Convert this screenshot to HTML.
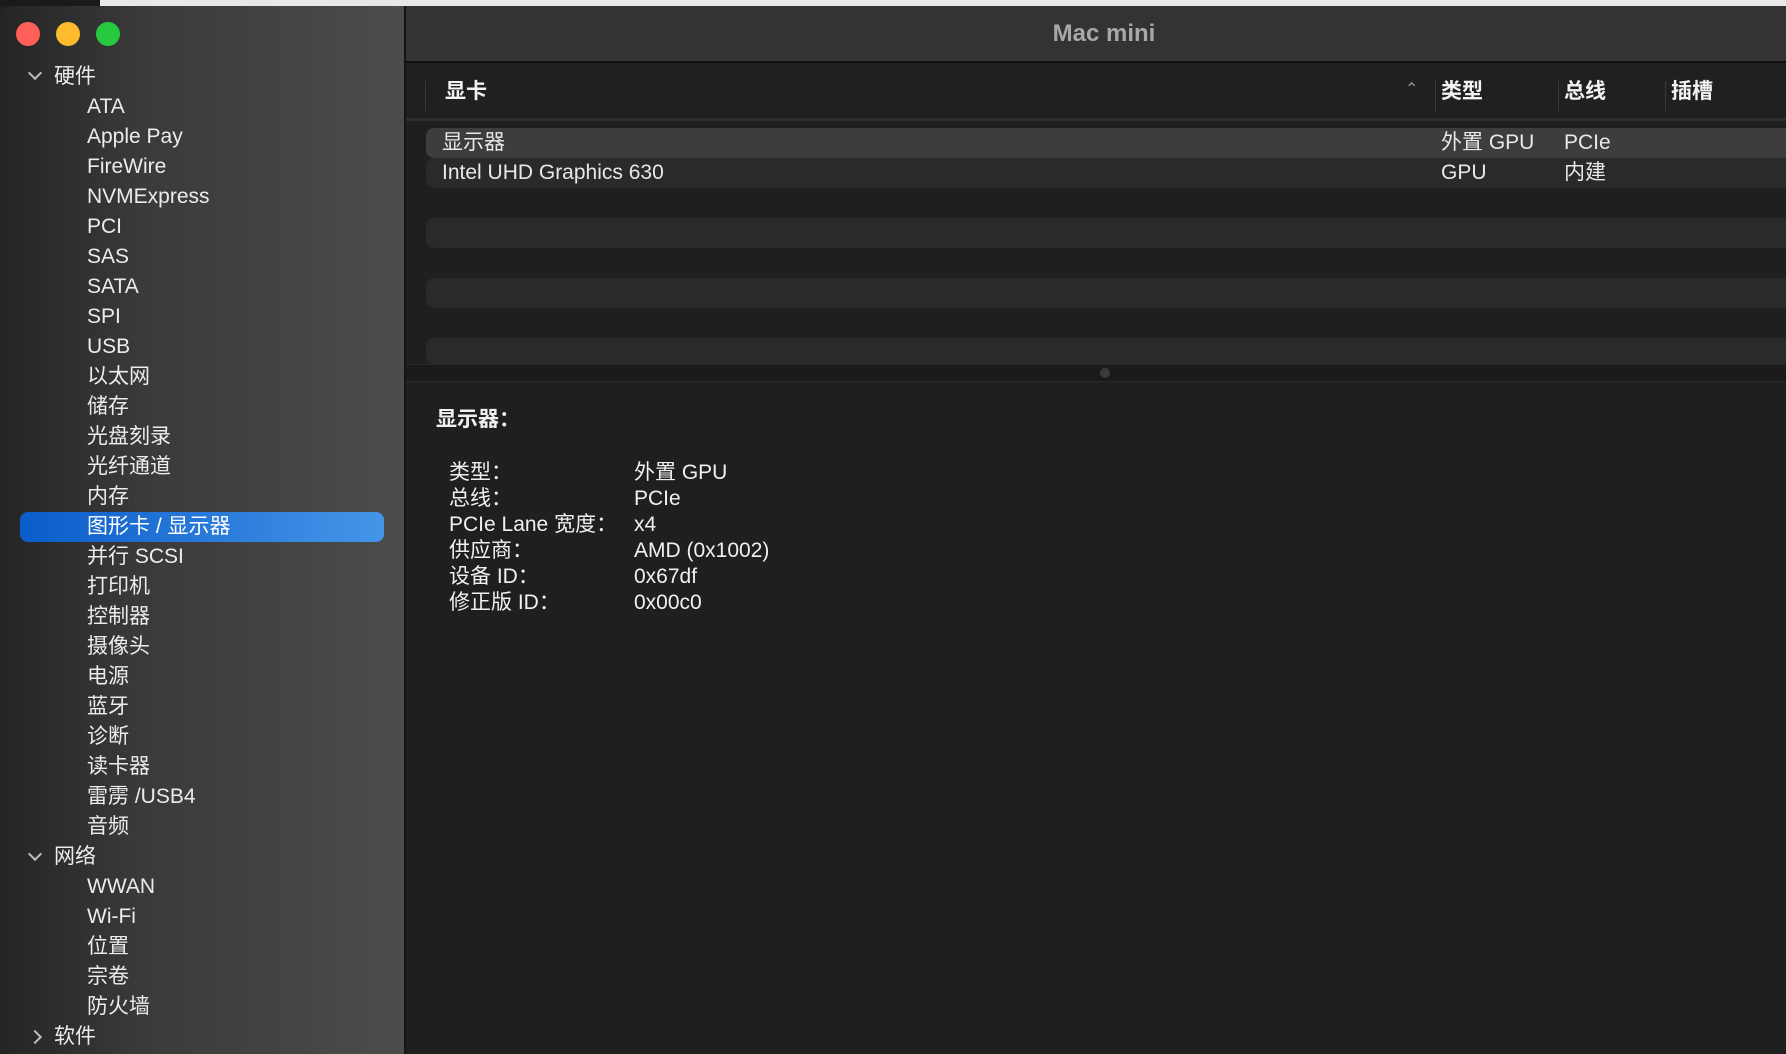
<!DOCTYPE html>
<html><head><meta charset="utf-8"><style>
*{margin:0;padding:0;box-sizing:border-box}
body{width:1786px;height:1054px;background:#1e1f1f;overflow:hidden;position:relative;font-family:"Liberation Sans","Noto Sans CJK SC",sans-serif;color:#e6e6e6}
.top{position:absolute;left:0;top:0;width:1786px;height:6px;background:#e8e8e8}
.top2{position:absolute;left:0;top:0;width:100px;height:6px;background:#1a1a1a}
.win{position:absolute;left:0;top:6px;width:1786px;height:1048px;background:#1e1f1f;border-top-left-radius:10px;overflow:hidden}
.side{position:absolute;left:0;top:0;width:406px;height:1048px;background:linear-gradient(90deg,#242424 0%,#3a3a3a 35%,#4c4c4c 100%);border-right:2px solid #151515}
.tl{position:absolute;top:16px;width:24px;height:24px;border-radius:50%}
.s{position:absolute;font-size:21px;color:#ececec;line-height:30px;white-space:nowrap;margin-top:2px}
.sel{position:absolute;left:20px;top:506px;width:364px;height:30px;border-radius:8px;background:linear-gradient(90deg,#0a5cc9,#4596e8)}
.chev{position:absolute;width:10px;height:10px;border-right:2px solid #bdbdbd;border-bottom:2px solid #bdbdbd}
.title{position:absolute;left:406px;top:0;width:1380px;height:57px;padding-left:16px;background:#333;border-bottom:2px solid #111;text-align:center;font-size:24px;font-weight:bold;line-height:56px;color:#a8a8a8}
.hdr{position:absolute;left:406px;top:59px;width:1380px;height:56px;background:#1f2020;border-bottom:3px solid #2e2e2e}
.hs{position:absolute;top:16px;width:1px;height:30px;background:#3a3a3a}
.ht{position:absolute;top:10px;font-size:21px;font-weight:bold;color:#f2f2f2}
.row{position:absolute;left:426px;width:1360px;height:30px;border-radius:8px 0 0 8px;font-size:21px;line-height:30px;color:#e8e8e8}
.row span{position:absolute;top:0}
.det{position:absolute;font-size:21px;line-height:26px;color:#f0f0f0;white-space:nowrap}
</style></head><body>
<div class="top"></div><div class="top2"></div>
<div class="win">
<div class="side">
<div class="tl" style="left:16px;background:#fe5f57"></div>
<div class="tl" style="left:56px;background:#febb2e"></div>
<div class="tl" style="left:96px;background:#28c840"></div>
<div class="sel"></div>
<div class="chev" style="left:30px;top:62px;transform:rotate(45deg)"></div>
<div class="chev" style="left:30px;top:843px;transform:rotate(45deg)"></div>
<div class="chev" style="left:30px;top:1026px;transform:rotate(-45deg)"></div>
<div class="s" style="left:54px;top:54px">硬件</div>
<div class="s" style="left:87px;top:84px">ATA</div>
<div class="s" style="left:87px;top:114px">Apple Pay</div>
<div class="s" style="left:87px;top:144px">FireWire</div>
<div class="s" style="left:87px;top:174px">NVMExpress</div>
<div class="s" style="left:87px;top:204px">PCI</div>
<div class="s" style="left:87px;top:234px">SAS</div>
<div class="s" style="left:87px;top:264px">SATA</div>
<div class="s" style="left:87px;top:294px">SPI</div>
<div class="s" style="left:87px;top:324px">USB</div>
<div class="s" style="left:87px;top:354px">以太网</div>
<div class="s" style="left:87px;top:384px">储存</div>
<div class="s" style="left:87px;top:414px">光盘刻录</div>
<div class="s" style="left:87px;top:444px">光纤通道</div>
<div class="s" style="left:87px;top:474px">内存</div>
<div class="s" style="left:87px;top:504px;color:#fff">图形卡 / 显示器</div>
<div class="s" style="left:87px;top:534px">并行 SCSI</div>
<div class="s" style="left:87px;top:564px">打印机</div>
<div class="s" style="left:87px;top:594px">控制器</div>
<div class="s" style="left:87px;top:624px">摄像头</div>
<div class="s" style="left:87px;top:654px">电源</div>
<div class="s" style="left:87px;top:684px">蓝牙</div>
<div class="s" style="left:87px;top:714px">诊断</div>
<div class="s" style="left:87px;top:744px">读卡器</div>
<div class="s" style="left:87px;top:774px">雷雳 /USB4</div>
<div class="s" style="left:87px;top:804px">音频</div>
<div class="s" style="left:54px;top:834px">网络</div>
<div class="s" style="left:87px;top:864px">WWAN</div>
<div class="s" style="left:87px;top:894px">Wi-Fi</div>
<div class="s" style="left:87px;top:924px">位置</div>
<div class="s" style="left:87px;top:954px">宗卷</div>
<div class="s" style="left:87px;top:984px">防火墙</div>
<div class="s" style="left:54px;top:1014px">软件</div>
</div>
<div class="title">Mac mini</div>
<div class="hdr">
<div class="hs" style="left:19px"></div>
<div class="ht" style="left:39px">显卡</div>
<div style="position:absolute;left:999px;top:14px;font-size:16px;color:#999">&#8963;</div>
<div class="hs" style="left:1029px"></div><div class="ht" style="left:1035px">类型</div>
<div class="hs" style="left:1152px"></div><div class="ht" style="left:1158px">总线</div>
<div class="hs" style="left:1259px"></div><div class="ht" style="left:1265px">插槽</div>
</div>
<div class="row" style="top:122px;background:#3d3d3d"><span style="left:16px">显示器</span><span style="left:1015px">外置 GPU</span><span style="left:1138px">PCIe</span></div>
<div class="row" style="top:152px;background:#292a2a"><span style="left:16px">Intel UHD Graphics 630</span><span style="left:1015px">GPU</span><span style="left:1138px">内建</span></div>
<div class="row" style="top:212px;background:#292a2a"></div>
<div class="row" style="top:272px;background:#292a2a"></div>
<div class="row" style="top:332px;background:#292a2a;height:26px"></div>
<div style="position:absolute;left:406px;top:358px;width:1380px;height:18px;background:#1a1a1a;border-top:1px solid #2a2a2a;border-bottom:1px solid #2a2a2a"></div>
<div style="position:absolute;left:1100px;top:362px;width:10px;height:10px;border-radius:5px;background:#3a3a3a"></div>
<div class="det" style="left:436px;top:401px;font-weight:bold">显示器：</div>
<div class="det" style="left:449px;top:454px">类型：<br>总线：<br>PCIe Lane 宽度：<br>供应商：<br>设备 ID：<br>修正版 ID：</div>
<div class="det" style="left:634px;top:454px">外置 GPU<br>PCIe<br>x4<br>AMD (0x1002)<br>0x67df<br>0x00c0</div>
</div>
</body></html>
